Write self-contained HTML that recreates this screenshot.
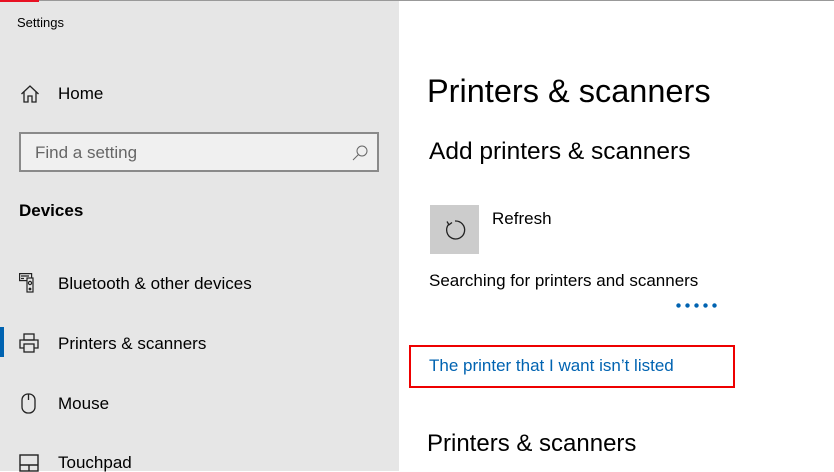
<!DOCTYPE html>
<html><head><meta charset="utf-8"><style>
*{margin:0;padding:0;box-sizing:border-box}
body{width:834px;height:471px;overflow:hidden;position:relative;font-family:"Liberation Sans",sans-serif;color:#000;background:#fff}
.side{position:absolute;left:0;top:0;width:399px;height:471px;background:#e6e6e6}
.t{position:absolute;white-space:nowrap;line-height:1}
svg{position:absolute}
</style></head><body>
<div class="side"></div>
<div style="position:absolute;left:0;top:0;width:834px;height:1px;background:#999"></div>
<div style="position:absolute;left:0;top:0;width:39px;height:2px;background:#e81123"></div>
<div class="t" style="left:17px;top:16px;font-size:13px">Settings</div>

<svg style="left:20px;top:84px" width="20" height="20" viewBox="0 0 20 20" fill="none" stroke="#222" stroke-width="1.3"><path d="M1.5 10 L10 2 L18.5 10 M4 8 V18 H8 V12 H12 V18 H16 V8"/></svg>
<div class="t" style="left:58px;top:85px;font-size:17px">Home</div>

<div style="position:absolute;left:19px;top:132px;width:360px;height:40px;border:2px solid #8a8a8a;background:#f0f0f0"></div>
<div class="t" style="left:35px;top:144px;font-size:17px;color:#666">Find a setting</div>
<svg style="left:351px;top:144px" width="18" height="18" viewBox="0 0 18 18" fill="none" stroke="#666" stroke-width="1"><circle cx="11" cy="7" r="5"/><path d="M7.5 10.5 L2 16"/></svg>

<div class="t" style="left:19px;top:202px;font-size:17px;font-weight:bold">Devices</div>

<svg style="left:19px;top:273px" width="22" height="20" viewBox="0 0 22 20" fill="none" stroke="#222" stroke-width="1.2"><rect x="0.6" y="0.6" width="12" height="7"/><path d="M2 3h8M2 5.5h3" /><rect x="8" y="5" width="6" height="14" fill="#e6e6e6"/><circle cx="11" cy="10" r="1.6"/><circle cx="11" cy="16" r="0.8" fill="#222"/></svg>
<div class="t" style="left:58px;top:275px;font-size:17px">Bluetooth &amp; other devices</div>

<div style="position:absolute;left:0;top:327px;width:4px;height:30px;background:#0063b1"></div>
<svg style="left:19px;top:333px" width="21" height="20" viewBox="0 0 21 20" fill="none" stroke="#222" stroke-width="1.3"><rect x="5" y="1" width="10" height="6"/><path d="M5 15H1V7H19V15H15"/><rect x="5" y="11" width="10" height="8"/></svg>
<div class="t" style="left:58px;top:335px;font-size:17px">Printers &amp; scanners</div>

<svg style="left:20px;top:393px" width="18" height="22" viewBox="0 0 18 22" fill="none" stroke="#222" stroke-width="1.3"><rect x="2" y="1" width="13" height="19" rx="6"/><path d="M8.5 1v6"/></svg>
<div class="t" style="left:58px;top:395px;font-size:17px">Mouse</div>

<svg style="left:19px;top:454px" width="20" height="18" viewBox="0 0 20 18" fill="none" stroke="#222" stroke-width="1.4"><rect x="1" y="1" width="18" height="16"/><path d="M1 11H19M10 11V17"/></svg>
<div class="t" style="left:58px;top:454px;font-size:17px">Touchpad</div>

<div class="t" style="left:427px;top:75px;font-size:32.5px">Printers &amp; scanners</div>
<div class="t" style="left:429px;top:140px;font-size:24.5px">Add printers &amp; scanners</div>

<div style="position:absolute;left:430px;top:205px;width:49px;height:49px;background:#cccccc"></div>
<svg style="left:443px;top:218px" width="24" height="24" viewBox="0 0 24 24" fill="none" stroke="#222" stroke-width="1.3"><path d="M5.5 6.5 A9 9 0 1 0 12 3"/><path d="M4 3.5 L6 6.8 L9 4.5"/></svg>
<div class="t" style="left:492px;top:210px;font-size:17px">Refresh</div>
<div class="t" style="left:429px;top:272px;font-size:17px">Searching for printers and scanners</div>
<div style="position:absolute;left:674px;top:303px;width:46px;height:5px;background:radial-gradient(circle,#0063b1 2px,transparent 2.4px) 0 0/9px 5px repeat-x"></div>

<div style="position:absolute;left:409px;top:345px;width:326px;height:43px;border:2px solid #e00"></div>
<div class="t" style="left:429px;top:357px;font-size:17px;color:#0063b1">The printer that I want isn’t listed</div>

<div class="t" style="left:427px;top:432px;font-size:24px">Printers &amp; scanners</div>
</body></html>
